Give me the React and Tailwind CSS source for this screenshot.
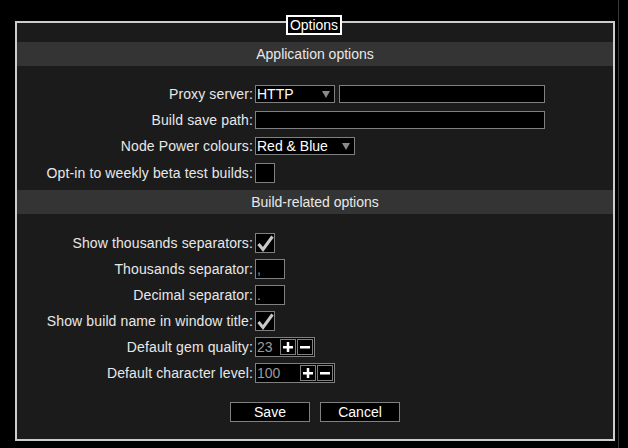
const Arrow = () => (
    <svg width="8" height="7" viewBox="0 0 8 7" className="shrink-0">
        <polygon points="0,0 8,0 4,7" fill="#8a8a8a" />
    </svg>
)

const Check = () => (
    <svg width="18" height="18" viewBox="0 0 18 18">
        <path d="M2.5 10 L7 15.5 L16.5 2.5" fill="none" stroke="#c8c8c8" strokeWidth="3" strokeLinejoin="miter" />
    </svg>
)

const Dropdown = ({ value, width }) => (
    <div className={`flex items-center justify-between h-[18px] border border-[#808080] bg-black pl-[1px] pr-[4px] ${width}`}>
        <span className="text-white leading-[16px]">{value}</span>
        <Arrow />
    </div>
)

const Checkbox = ({ checked }) => (
    <div className="flex items-center justify-center w-[20px] h-[20px] border border-[#808080] bg-black">
        {checked && <Check />}
    </div>
)

const SmallBtn = ({ plus }) => (
    <div className="flex items-center justify-center w-[16px] h-[16px] border border-[#808080] bg-black">
        <svg width="12" height="12" viewBox="0 0 12 12">
            <rect x="1" y="5" width="10" height="2.5" fill="#ffffff" />
            {plus && <rect x="4.75" y="1" width="2.5" height="10" fill="#ffffff" />}
        </svg>
    </div>
)

const NumberBox = ({ value, width }) => (
    <div className={`flex items-center h-[20px] border border-[#808080] bg-black pl-[1px] pr-[1px] ${width}`}>
        <span className="text-[#9a9a9a] leading-[18px] flex-1">{value}</span>
        <div className="flex gap-[1px]">
            <SmallBtn plus />
            <SmallBtn />
        </div>
    </div>
)

const Row = ({ label, children, h }) => (
    <div className={`flex items-center ${h}`}>
        <div className="w-[236px] text-right text-[#e8e8e8] leading-[16px] tracking-[0.12px]">{label}</div>
        <div className="ml-[2px] flex items-center">{children}</div>
    </div>
)

export default function App() {
    return (
        <div className="w-[628px] h-[448px] bg-black flex font-['Liberation_Sans',Arial,sans-serif] text-[14px]">
            <div className="w-[618px] pt-[21px] pl-[15px]">
                <div className="relative w-[600px] h-[420px] border-2 border-[#cccccc] bg-[#1b1b1b] pt-[19px]">
                    <div className="absolute left-[269px] top-[-8px] w-[56px] h-[20px] border-2 border-white bg-black text-white text-center leading-[16px]">
                        Options
                    </div>

                    <div className="h-[24px] bg-[#343434] text-center text-[#e8e8e8] leading-[24px]">Application options</div>

                    <div className="mt-[19px] flex flex-col gap-[8px]">
                        <Row label="Proxy server:" h="h-[18px]">
                            <Dropdown value="HTTP" width="w-[80px]" />
                            <div className="ml-[4px] w-[206px] h-[18px] border border-[#808080] bg-black"></div>
                        </Row>
                        <Row label="Build save path:" h="h-[18px]">
                            <div className="w-[290px] h-[18px] border border-[#808080] bg-black"></div>
                        </Row>
                        <Row label="Node Power colours:" h="h-[18px]">
                            <Dropdown value="Red & Blue" width="w-[100px]" />
                        </Row>
                        <Row label="Opt-in to weekly beta test builds:" h="h-[20px]">
                            <Checkbox />
                        </Row>
                    </div>

                    <div className="mt-[7px] h-[24px] bg-[#343434] text-center text-[#e8e8e8] leading-[24px]">Build-related options</div>

                    <div className="mt-[19px] flex flex-col gap-[6px]">
                        <Row label="Show thousands separators:" h="h-[20px]">
                            <Checkbox checked />
                        </Row>
                        <Row label="Thousands separator:" h="h-[20px]">
                            <div className="w-[30px] h-[20px] border border-[#808080] bg-black pl-[1px] text-[#9a9a9a] leading-[18px]">,</div>
                        </Row>
                        <Row label="Decimal separator:" h="h-[20px]">
                            <div className="w-[30px] h-[20px] border border-[#808080] bg-black pl-[1px] text-[#9a9a9a] leading-[18px]">.</div>
                        </Row>
                        <Row label="Show build name in window title:" h="h-[20px]">
                            <Checkbox checked />
                        </Row>
                        <Row label="Default gem quality:" h="h-[20px]">
                            <NumberBox value="23" width="w-[60px]" />
                        </Row>
                        <Row label="Default character level:" h="h-[20px]">
                            <NumberBox value="100" width="w-[80px]" />
                        </Row>
                    </div>

                    <div className="mt-[19px] flex justify-center gap-[10px]">
                        <button className="w-[80px] h-[20px] border border-[#808080] bg-black text-white leading-[18px]">Save</button>
                        <button className="w-[80px] h-[20px] border border-[#808080] bg-black text-white leading-[18px]">Cancel</button>
                    </div>
                </div>
            </div>
            <div className="w-[1px] h-full bg-[#3a3a3a]"></div>
        </div>
    )
}
